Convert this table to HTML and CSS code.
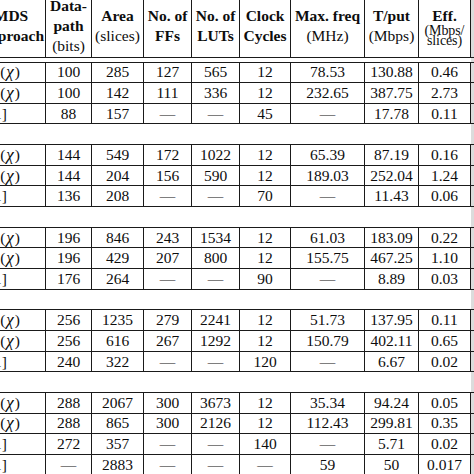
FILE: index.html
```html
<!DOCTYPE html>
<html>
<head>
<meta charset="utf-8">
<link rel="stylesheet" href="styles.css">
</head>
<body>
<div class="page">
<table class="results">
  <colgroup>
    <col class="c0"><col class="c1"><col class="c2"><col class="c3"><col class="c4"><col class="c5"><col class="c6"><col class="c7"><col class="c8"><col class="c9">
  </colgroup>
  <thead>
    <tr class="head">
      <th class="lead"><b>MDS<br>Approach</b></th>
      <th><b>Data-<br>path</b><br>(bits)</th>
      <th><b>Area</b><br>(slices)</th>
      <th><b>No. of<br>FFs</b></th>
      <th><b>No. of<br>LUTs</b></th>
      <th><b>Clock<br>Cycles</b></th>
      <th><b>Max. freq</b><br>(MHz)</th>
      <th><b>T/put</b><br>(Mbps)</th>
      <th><b>Eff.</b><span class="unit">(Mbps/<br>slices)</span></th>
      <th class="shade"></th>
    </tr>
  </thead>
  <tbody>
    <tr class="dbl"><td></td><td></td><td></td><td></td><td></td><td></td><td></td><td></td><td></td><td class="shade"></td></tr>

    <tr class="r"><td class="name">Serial (<i>χ</i>)</td><td>100</td><td>285</td><td>127</td><td>565</td><td>12</td><td>78.53</td><td>130.88</td><td>0.46</td><td class="shade"></td></tr>
    <tr class="r"><td class="name">Parallel (<i>χ</i>)</td><td>100</td><td>142</td><td>111</td><td>336</td><td>12</td><td>232.65</td><td>387.75</td><td>2.73</td><td class="shade"></td></tr>
    <tr class="r"><td class="name cite">[11]</td><td>88</td><td>157</td><td>—</td><td>—</td><td>45</td><td>—</td><td>17.78</td><td>0.11</td><td class="shade"></td></tr>
    <tr class="gap"><td></td><td></td><td></td><td></td><td></td><td></td><td></td><td></td><td></td><td class="shade"></td></tr>

    <tr class="r"><td class="name">Serial (<i>χ</i>)</td><td>144</td><td>549</td><td>172</td><td>1022</td><td>12</td><td>65.39</td><td>87.19</td><td>0.16</td><td class="shade"></td></tr>
    <tr class="r"><td class="name">Parallel (<i>χ</i>)</td><td>144</td><td>204</td><td>156</td><td>590</td><td>12</td><td>189.03</td><td>252.04</td><td>1.24</td><td class="shade"></td></tr>
    <tr class="r"><td class="name cite">[11]</td><td>136</td><td>208</td><td>—</td><td>—</td><td>70</td><td>—</td><td>11.43</td><td>0.06</td><td class="shade"></td></tr>
    <tr class="gap"><td></td><td></td><td></td><td></td><td></td><td></td><td></td><td></td><td></td><td class="shade"></td></tr>

    <tr class="r"><td class="name">Serial (<i>χ</i>)</td><td>196</td><td>846</td><td>243</td><td>1534</td><td>12</td><td>61.03</td><td>183.09</td><td>0.22</td><td class="shade"></td></tr>
    <tr class="r"><td class="name">Parallel (<i>χ</i>)</td><td>196</td><td>429</td><td>207</td><td>800</td><td>12</td><td>155.75</td><td>467.25</td><td>1.10</td><td class="shade"></td></tr>
    <tr class="r"><td class="name cite">[11]</td><td>176</td><td>264</td><td>—</td><td>—</td><td>90</td><td>—</td><td>8.89</td><td>0.03</td><td class="shade"></td></tr>
    <tr class="gap"><td></td><td></td><td></td><td></td><td></td><td></td><td></td><td></td><td></td><td class="shade"></td></tr>

    <tr class="r"><td class="name">Serial (<i>χ</i>)</td><td>256</td><td>1235</td><td>279</td><td>2241</td><td>12</td><td>51.73</td><td>137.95</td><td>0.11</td><td class="shade"></td></tr>
    <tr class="r"><td class="name">Parallel (<i>χ</i>)</td><td>256</td><td>616</td><td>267</td><td>1292</td><td>12</td><td>150.79</td><td>402.11</td><td>0.65</td><td class="shade"></td></tr>
    <tr class="r"><td class="name cite">[11]</td><td>240</td><td>322</td><td>—</td><td>—</td><td>120</td><td>—</td><td>6.67</td><td>0.02</td><td class="shade"></td></tr>
    <tr class="gap"><td></td><td></td><td></td><td></td><td></td><td></td><td></td><td></td><td></td><td class="shade"></td></tr>

    <tr class="r"><td class="name">Serial (<i>χ</i>)</td><td>288</td><td>2067</td><td>300</td><td>3673</td><td>12</td><td>35.34</td><td>94.24</td><td>0.05</td><td class="shade"></td></tr>
    <tr class="r"><td class="name">Parallel (<i>χ</i>)</td><td>288</td><td>865</td><td>300</td><td>2126</td><td>12</td><td>112.43</td><td>299.81</td><td>0.35</td><td class="shade"></td></tr>
    <tr class="r"><td class="name cite">[11]</td><td>272</td><td>357</td><td>—</td><td>—</td><td>140</td><td>—</td><td>5.71</td><td>0.02</td><td class="shade"></td></tr>
    <tr class="r"><td class="name cite">[21]</td><td>—</td><td>2883</td><td>—</td><td>—</td><td>—</td><td>59</td><td>50</td><td>0.017</td><td class="shade"></td></tr>
  </tbody>
</table>
</div>
</body>
</html>
```

FILE: styles.css
```css
html, body {
  margin: 0;
  padding: 0;
  background: #fff;
}

.page {
  width: 474px;
  height: 474px;
  overflow: hidden;
}

.results {
  margin: -5px 0 0 -94px;
  border-collapse: collapse;
  table-layout: fixed;
  width: 594px;
  font-family: "Liberation Serif", "Times New Roman", serif;
  font-size: 15.5px;
  color: #0d0d0d;
}

.c0 { width: 139px; }
.c1 { width: 46px; }
.c2 { width: 52px; }
.c3 { width: 48px; }
.c4 { width: 48px; }
.c5 { width: 51px; }
.c6 { width: 74px; }
.c7 { width: 54px; }
.c8 { width: 52px; }
.c9 { width: 30px; }

.results th,
.results td {
  padding: 0;
  text-align: center;
  vertical-align: middle;
  white-space: nowrap;
  overflow: hidden;
}

.results th {
  font-weight: normal;
  line-height: 20px;
  border-left: 1px solid #1a1a1a;
  border-right: 1px solid #1a1a1a;
  border-bottom: 1px solid #1a1a1a;
}

.results th.lead {
  padding-left: 70px;
}

.results th b {
  font-weight: bold;
}

.head {
  height: 62px;
}

.unit {
  display: block;
  font-size: 14px;
  line-height: 10px;
  letter-spacing: -0.1px;
}

.dbl {
  height: 5px;
}

.dbl td {
  border: none;
}

.r {
  height: 20.67px;
}

.r td {
  border: 1px solid #1a1a1a;
  line-height: 18px;
}

.r td.name {
  text-align: right;
  padding-right: 25px;
}

.r td.name.cite {
  padding-right: 38px;
}

.r td.name i {
  font-style: italic;
  font-size: 17px;
  padding: 0 1px;
}

.gap {
  height: 20.67px;
}

.gap td {
  border: none;
}

.results .shade {
  background: #dcdcdc;
}
```
